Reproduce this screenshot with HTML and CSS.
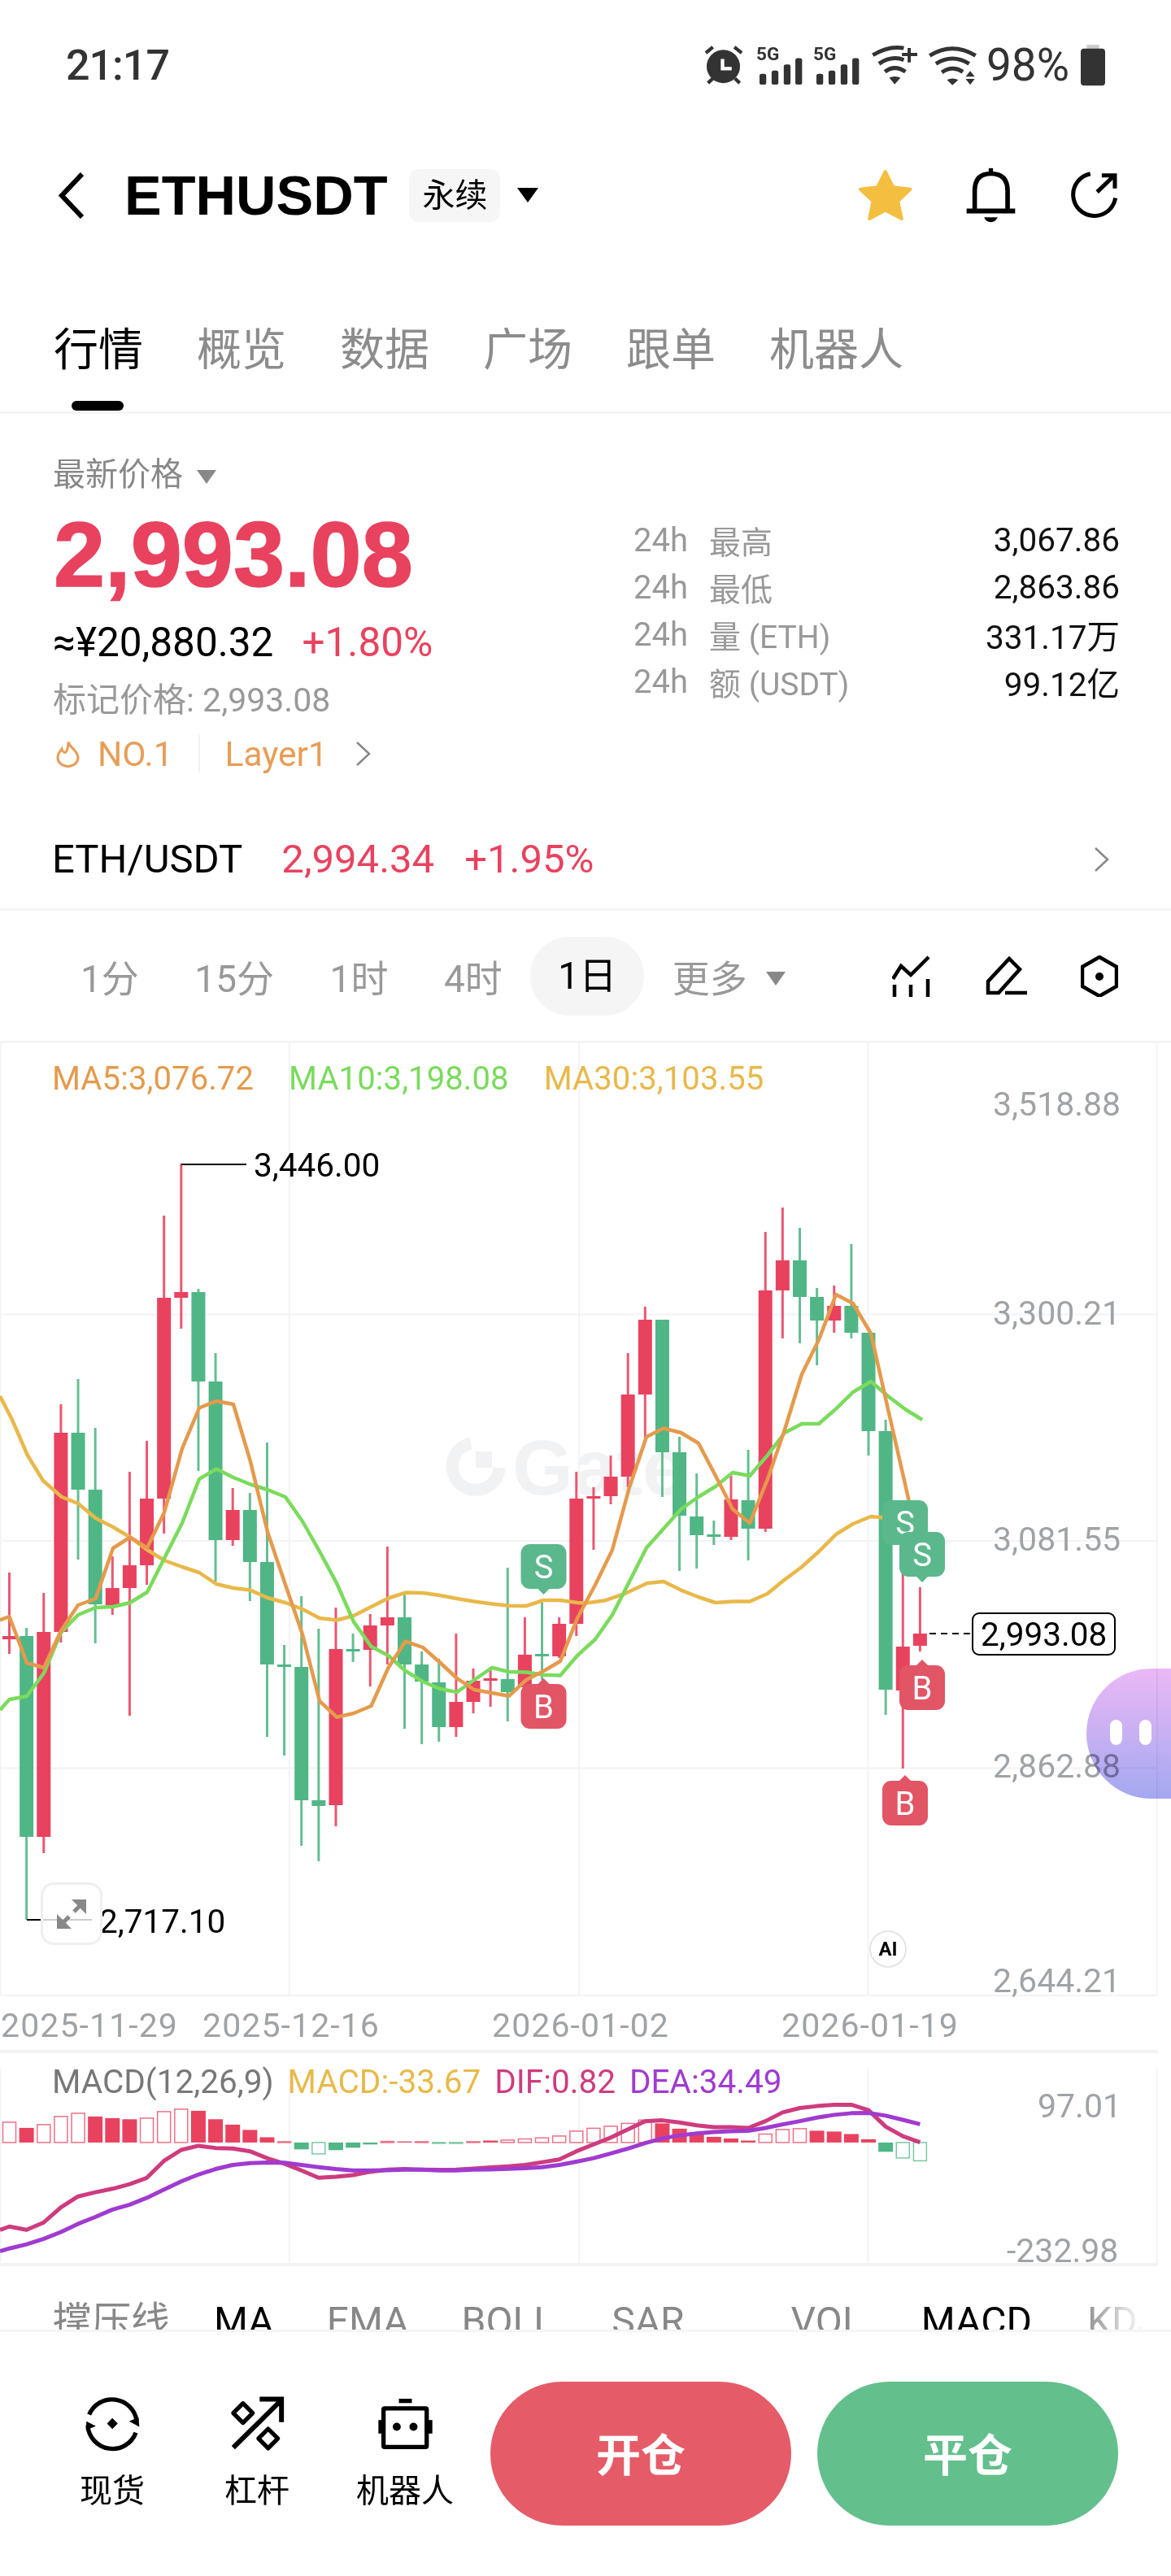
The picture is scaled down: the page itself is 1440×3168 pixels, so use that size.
FILE: index.html
```html
<!DOCTYPE html>
<html lang="zh-CN">
<head>
  <meta charset="UTF-8">
  <meta name="viewport" content="width=device-width, initial-scale=1.0">
  <title>ETHUSDT 永续</title>
  <link rel="stylesheet" href="styles.css">
</head>
<body>
  <div class="page">
    <div class="status">
      <span class="clock">21:17</span>
      <div class="status-icons">
        <svg class="ic-alarm" viewBox="18 30 145 150"><circle cx="89" cy="110" r="62" fill="#333"/><path d="M24 60 50 38M130 38 157 60M32 172 50 155M132 155 150 172" stroke="#333" stroke-width="13" fill="none"/><path d="M86 82V118H120" stroke="#fff" stroke-width="13" fill="none"/></svg>
        <svg class="ic-net" viewBox="205 30 175 155"><text x="205" y="88" class="net-text">5G</text><rect x="217" y="140" width="25" height="40" rx="8"/><rect x="262" y="128" width="25" height="52" rx="8"/><rect x="307" y="105" width="25" height="75" rx="8"/><rect x="350" y="82" width="25" height="98" rx="8"/></svg>
        <svg class="ic-net" viewBox="205 30 175 155"><text x="205" y="88" class="net-text">5G</text><rect x="217" y="140" width="25" height="40" rx="8"/><rect x="262" y="128" width="25" height="52" rx="8"/><rect x="307" y="105" width="25" height="75" rx="8"/><rect x="350" y="82" width="25" height="98" rx="8"/></svg>
        <svg class="ic-wifi" viewBox="630 30 175 150"><path d="M698 152Q718 142 740 152L718 177Z" fill="#333"/><path d="M682 130Q718 102 758 130M660 100Q708 68 752 86M637 68Q695 32 752 42" stroke="#333" stroke-width="15" fill="none"/><path d="M745 66H802M772 42V95" stroke="#333" stroke-width="12" fill="none"/></svg>
        <svg class="ic-wifi2" viewBox="848 30 178 150"><path d="M916 160Q936 150 958 160L936 180Z" fill="#333"/><path d="M897 132Q936 105 975 130M875 100Q936 62 998 100M852 70Q936 18 1022 70" stroke="#333" stroke-width="15" fill="none"/><path d="M985 148 1002 127 1019 148ZM985 156H1019L1002 178Z" fill="#333"/></svg>
        <span class="batt-text">98%</span>
        <svg class="ic-batt" viewBox="1410 28 90 152"><rect x="1432" y="28" width="46" height="16" fill="#ccc"/><rect x="1410" y="42" width="90" height="136" rx="12" fill="#333"/></svg>
      </div>
    </div>

    <div class="nav">
      <svg class="ic-back" viewBox="0 0 31 57"><path d="M29 2 4 28.5 29 55" fill="none" stroke="#000" stroke-width="6"/></svg>
      <span class="symbol">ETHUSDT</span>
      <span class="perp">永续</span>
      <span class="tri tri-black"></span>
      <div class="nav-right">
        <svg class="ic-star" viewBox="42 50 204 200"><path d="M143 62 172 120 236 128 190 172 204 238 143 206 84 238 97 172 50 128 114 120Z" fill="#F4BE41" stroke="#F4BE41" stroke-width="12" stroke-linejoin="round"/></svg>
        <svg class="ic-bell" viewBox="436 46 184 204"><path d="M468 205V132Q468 68 528 68 590 68 590 132V205" fill="none" stroke="#000" stroke-width="17"/><path d="M438 207H618" stroke="#000" stroke-width="18"/><rect x="520" y="48" width="16" height="18"/><path d="M503 230H553Q545 248 528 248 510 248 503 230Z"/></svg>
        <svg class="ic-share" viewBox="820 65 182 182"><path d="M900 76A78 78 0 1 0 992 165" fill="none" stroke="#000" stroke-width="15"/><path d="M925 143 985 85M942 82H990V130" fill="none" stroke="#000" stroke-width="15"/></svg>
      </div>
    </div>

    <div class="tabs">
      <span class="tab active">行情</span>
      <span class="tab">概览</span>
      <span class="tab">数据</span>
      <span class="tab">广场</span>
      <span class="tab">跟单</span>
      <span class="tab">机器人</span>
    </div>

    <div class="quote">
      <div class="quote-left">
        <div class="last-label">最新价格<span class="tri tri-gray"></span></div>
        <div class="last-price">2,993.08</div>
        <div class="cny">≈¥20,880.32<span class="up">+1.80%</span></div>
        <div class="mark">标记价格: 2,993.08</div>
        <div class="tags">
          <svg class="ic-flame" viewBox="0 0 29 33"><path d="M15 1.5C17 9 27 12 27 21A12.500 10.500 0 0 1 2 21C2 15 5 13 7 10 8 14 10 15 12 14 14 11 15 7 15 1.500Z" fill="none" stroke="#E89D57" stroke-width="3"/></svg>
          <span>NO.1</span>
          <i class="tag-sep"></i>
          <span>Layer1</span>
          <svg class="ic-more" viewBox="0 0 19 30"><path d="M2 1 17 15 2 29" fill="none" stroke="#888" stroke-width="2.500"/></svg>
        </div>
      </div>
      <div class="stats">
        <div class="stat"><span class="h">24h</span><span class="k">最高</span><span class="v">3,067.86</span></div>
        <div class="stat"><span class="h">24h</span><span class="k">最低</span><span class="v">2,863.86</span></div>
        <div class="stat"><span class="h">24h</span><span class="k">量 (ETH)</span><span class="v">331.17万</span></div>
        <div class="stat"><span class="h">24h</span><span class="k">额 (USDT)</span><span class="v">99.12亿</span></div>
      </div>
    </div>

    <div class="spot">
      <span class="spot-name">ETH/USDT</span>
      <span class="up spot-price">2,994.34</span>
      <span class="up">+1.95%</span>
      <svg class="ic-more spot-more" viewBox="0 0 19 30"><path d="M2 1 17 15 2 29" fill="none" stroke="#888" stroke-width="2.500"/></svg>
    </div>

    <div class="toolbar">
      <span class="tf">1分</span>
      <span class="tf">15分</span>
      <span class="tf">1时</span>
      <span class="tf">4时</span>
      <span class="tf active">1日</span>
      <span class="tf">更多<span class="tri tri-gray tri-more"></span></span>
      <div class="tools">
        <svg class="ic-kind" viewBox="1097 1177 47 51"><path d="M1098 1206 1108 1190 1120 1201 1142 1179" fill="none" stroke="#000" stroke-width="4.500"/><path d="M1100 1213V1228M1120 1213V1228M1141 1206V1228" stroke="#000" stroke-width="4.500"/></svg>
        <svg class="ic-pen" viewBox="1212 1175 52 50"><path d="M1215 1221V1207L1241 1179 1254 1192 1228 1221Z" fill="none" stroke="#000" stroke-width="4.500"/><path d="M1236 1221H1263" stroke="#000" stroke-width="4.500"/></svg>
        <svg class="ic-hex" viewBox="1329 1177 46 51"><path d="M1352 1179 1373 1191V1215L1352 1227 1331 1215V1191Z" fill="none" stroke="#000" stroke-width="4.500"/><circle cx="1352" cy="1203" r="5"/></svg>
      </div>
    </div>

    <div class="chart">
      <svg class="watermark" viewBox="0 0 76 74"><path d="M32 8A29 29 0 1 0 67 38" fill="none" stroke="#F1F2F4" stroke-width="15"/><rect x="38" y="18" width="20" height="20" fill="#F1F2F4"/></svg>
      <span class="wm-text">Gate</span>
      <svg id="kline" class="plot" viewBox="0 1281 1440 1241"></svg>
      <div class="legend">
        <span class="ma5">MA5:3,076.72</span>
        <span class="ma10">MA10:3,198.08</span>
        <span class="ma30">MA30:3,103.55</span>
      </div>
      <div class="expand">
        <svg viewBox="0 0 36 36"><path d="M4 32 15 21M21 15 32 4" stroke="#888" stroke-width="5"/><path d="M0 18V36H18ZM18 0H36V18Z" fill="#888"/></svg>
      </div>
      <div class="ai">AI</div>
      <div class="bubble"><i></i><i></i></div>
    </div>

    <div class="macd">
      <svg id="macd" class="plot" viewBox="0 2522 1440 266"></svg>
      <div class="legend macd-legend">
        <span class="m-name">MACD(12,26,9)</span>
        <span class="m-macd">MACD:-33.67</span>
        <span class="m-dif">DIF:0.82</span>
        <span class="m-dea">DEA:34.49</span>
      </div>
    </div>

    <div class="inds">
      <span class="ind ind-first">撑压线</span>
      <span class="ind on">MA</span>
      <span class="ind">EMA</span>
      <span class="ind">BOLL</span>
      <span class="ind ind-sar">SAR</span>
      <i class="ind-sep"></i>
      <span class="ind">VOL</span>
      <span class="ind on ind-macd">MACD</span>
      <span class="ind">KDJ</span>
    </div>

    <div class="bottom">
      <div class="tool">
        <svg viewBox="40 24 208 208"><path d="M57 95A92 92 0 0 1 233 118M230 162A92 92 0 0 1 52 135" fill="none" stroke="#000" stroke-width="16"/><path d="M205 120 240 105 243 140ZM82 138 47 120 45 152ZM143 108 163 128 143 148 123 128Z"/></svg>
        <span>现货</span>
      </div>
      <div class="tool">
        <svg viewBox="585 40 185 185"><path d="M598 212 760 52M685 52H757V128" fill="none" stroke="#000" stroke-width="16"/><path d="M630 66 662 98 630 130 598 98ZM713 150 745 182 713 214 681 182Z" fill="none" stroke="#000" stroke-width="14" stroke-linejoin="round"/></svg>
        <span>杠杆</span>
      </div>
      <div class="tool tool-bot">
        <svg viewBox="1120 30 208 196"><rect x="1143" y="72" width="160" height="143" rx="4" fill="none" stroke="#000" stroke-width="16"/><rect x="1200" y="36" width="48" height="16"/><rect x="1124" y="115" width="14" height="50"/><rect x="1310" y="115" width="14" height="50"/><circle cx="1192" cy="140" r="15"/><circle cx="1254" cy="140" r="15"/></svg>
        <span>机器人</span>
      </div>
      <div class="actions">
        <button class="btn btn-open">开仓</button>
        <button class="btn btn-close">平仓</button>
      </div>
    </div>
  </div>
  <script src="chart.js"></script>
</body>
</html>
```

FILE: styles.css
```css
* {
  box-sizing: border-box;
}
body {
  margin: 0;
  background: #fff;
  font-family: Roboto, "Noto Sans CJK SC", sans-serif;
  color: #000;
}
.page {
  width: 1440px;
  height: 3168px;
  overflow: hidden;
}
svg {
  display: block;
  flex: none;
}
.up {
  color: #E8425F;
}

/* triangles */
.tri {
  display: inline-block;
  width: 0;
  height: 0;
  border-style: solid;
  border-color: transparent;
  border-bottom: 0;
}
.tri-black {
  border-width: 18px 13px 0;
  border-top-color: #000;
  margin-left: 21px;
}
.tri-gray {
  border-width: 17px 12px 0;
  border-top-color: #888;
  margin-left: 17px;
}

/* status bar */
.status {
  height: 160px;
  display: flex;
  align-items: center;
  justify-content: space-between;
  padding: 0 81px;
  color: #333;
}
.clock {
  font-size: 52px;
  font-weight: 500;
  letter-spacing: -1px;
}
.status-icons {
  display: flex;
  align-items: center;
}
.ic-alarm { width: 48px; height: 50px; margin-right: 16px; }
.ic-net { width: 58px; height: 52px; margin-right: 12px; fill: #333; }
.net-text { font-size: 68px; font-weight: 700; font-family: Roboto, sans-serif; }
.ic-wifi { width: 58px; height: 50px; margin-left: 1px; margin-right: 13px; }
.ic-wifi2 { width: 59px; height: 50px; margin-right: 12px; }
.batt-text { font-size: 55px; margin-right: 14px; }
.ic-batt { width: 30px; height: 51px; }

/* nav */
.nav {
  height: 160px;
  display: flex;
  align-items: center;
  padding-left: 72px;
  padding-right: 65px;
}
.ic-back { width: 31px; height: 57px; margin-right: 50px; }
.symbol {
  font-family: "Liberation Sans", sans-serif;
  font-weight: 700;
  font-size: 68.5px;
  margin-right: 27px;
}
.perp {
  width: 112px;
  height: 65px;
  background: #F6F6F6;
  border-radius: 12px;
  font-size: 40px;
  line-height: 65px;
  text-align: center;
}
.nav-right {
  margin-left: auto;
  display: flex;
  align-items: center;
}
.ic-star { width: 68px; height: 66px; margin-right: 65px; }
.ic-bell { width: 61px; height: 68px; margin-right: 65px; }
.ic-share { width: 61px; height: 61px; }

/* tabs */
.tabs {
  height: 189px;
  display: flex;
  gap: 66px;
  padding: 78px 0 0 66px;
  border-bottom: 3px solid #F5F5F5;
}
.tab {
  position: relative;
  font-size: 55px;
  line-height: 64px;
  height: 64px;
  color: #8c8c8c;
}
.tab.active {
  color: #000;
}
.tab.active::after {
  content: "";
  position: absolute;
  left: 22px;
  top: 95px;
  width: 64px;
  height: 12px;
  border-radius: 6px;
  background: #000;
}

/* quote */
.quote {
  height: 491px;
  display: flex;
  padding-left: 65px;
}
.quote-left {
  width: 714px;
}
.last-label {
  margin-top: 50px;
  font-size: 40px;
  line-height: 50px;
  color: #888;
}
.last-label .tri {
  vertical-align: 2px;
}
.last-price {
  font-family: "Liberation Sans", sans-serif;
  font-weight: 700;
  font-size: 113.5px;
  line-height: 120px;
  margin: 13px 0 0 1px;
  color: #E8425F;
  -webkit-text-stroke: 1.5px #E8425F;
}
.cny {
  font-size: 49.5px;
  line-height: 56px;
  margin-top: 20px;
}
.cny .up {
  margin-left: 35px;
}
.mark {
  font-size: 41px;
  line-height: 50px;
  margin-top: 18px;
  color: #999;
}
.tags {
  display: flex;
  align-items: center;
  height: 50px;
  margin-top: 16px;
  font-size: 42.5px;
  color: #E89D57;
}
.ic-flame { width: 29px; height: 33px; margin-left: 4px; margin-right: 22px; }
.tag-sep {
  width: 2px;
  height: 46px;
  background: #F2F2F2;
  margin: 0 31px;
}
.ic-more { width: 19px; height: 30px; margin-left: 34px; }
.stats {
  width: 598px;
  padding-top: 126px;
}
.stat {
  display: flex;
  height: 58px;
  align-items: center;
  font-size: 39px;
  color: #999;
}
.stat .h {
  width: 93px;
  font-size: 40px;
}
.stat .v {
  margin-left: auto;
  font-size: 40.5px;
  color: #111;
}

/* spot row */
.spot {
  height: 120px;
  display: flex;
  align-items: center;
  padding: 0 76px 4px 64px;
  font-size: 49px;
  border-bottom: 3px solid #F5F5F5;
}
.spot-name {
  margin-right: 48px;
}
.spot-price {
  margin-right: 37px;
}
.spot-more {
  margin-left: auto;
}

/* timeframe toolbar */
.toolbar {
  height: 160px;
  display: flex;
  align-items: center;
  gap: 68.5px;
  padding: 0 65px 0 99px;
  font-size: 46px;
  color: #999;
}
.tf {
  white-space: nowrap;
}
.tf.active {
  height: 97px;
  line-height: 97px;
  padding: 0 34px;
  margin: 0 -34px;
  border-radius: 48px;
  background: #F5F5F5;
  color: #000;
}
.tri-more {
  vertical-align: 8px;
  margin-left: 23px;
}
.tools {
  margin-left: auto;
  display: flex;
  align-items: center;
}
.ic-kind { width: 47px; height: 51px; margin-right: 68px; }
.ic-pen { width: 52px; height: 50px; margin-right: 65px; }
.ic-hex { width: 46px; height: 51px; }

/* kline */
.chart {
  position: relative;
  height: 1241px;
}
.plot {
  width: 1440px;
  height: 100%;
  position: relative;
}
.legend {
  position: absolute;
  left: 64px;
  top: 22px;
  display: flex;
  gap: 43px;
  font-size: 40px;
  line-height: 50px;
  letter-spacing: .1px;
  white-space: nowrap;
}
.ma5 { color: #E59A4C; }
.ma10 { color: #7ADB5C; }
.ma30 { color: #E9B84A; }
.watermark {
  position: absolute;
  left: 547px;
  top: 487px;
  width: 76px;
  height: 74px;
}
.wm-text {
  position: absolute;
  left: 630px;
  top: 465px;
  font-family: "Liberation Sans", sans-serif;
  font-weight: 700;
  font-size: 96px;
  line-height: 120px;
  color: #F1F2F4;
}
.expand {
  position: absolute;
  left: 50px;
  top: 1035px;
  width: 76px;
  height: 77px;
  display: flex;
  align-items: center;
  justify-content: center;
  border: 3px solid #EFEFEF;
  border-radius: 16px;
  background: rgba(255, 255, 255, .8);
}
.expand svg {
  width: 36px;
  height: 36px;
}
.ai {
  position: absolute;
  left: 1069px;
  top: 1094px;
  width: 46px;
  height: 46px;
  border: 2px solid #E4E4E4;
  border-radius: 50%;
  background: #fff;
  font-size: 24px;
  font-weight: 700;
  line-height: 42px;
  text-align: center;
}
.bubble {
  position: absolute;
  right: 0;
  top: 772px;
  width: 104px;
  height: 160px;
  display: flex;
  align-items: center;
  gap: 21px;
  padding-left: 29px;
}
/* multiply so the axis label shows through, as in the app */
.bubble::before {
  content: "";
  position: absolute;
  inset: 0;
  border-radius: 80px 0 0 80px;
  background: linear-gradient(180deg, #EBB8F6 0%, #A4A8F0 100%);
  mix-blend-mode: multiply;
}
.bubble i {
  position: relative;
  width: 15px;
  height: 31px;
  margin-top: -4px;
  border-radius: 8px;
  background: #fff;
}
.tick { font-size: 41px; fill: #9FA3A6; }
.tick-date { letter-spacing: 1.1px; }
.tick-dark { font-size: 40.5px; fill: #000; }
.sig { font-size: 40px; fill: #fff; text-anchor: middle; }

/* macd */
.macd {
  position: relative;
  height: 266px;
  border-top: 4px solid #F3F3F3;
  border-bottom: 4px solid #F3F3F3;
  margin-right: 16px;
}
.macd .plot {
  position: absolute;
  left: 0;
  top: -4px;
  height: 266px;
}
.macd-legend {
  top: 10px;
  gap: 17px;
  font-size: 40.5px;
  letter-spacing: 0;
}
.m-name { color: #777; }
.m-macd { color: #E8B94A; }
.m-dif { color: #CE3C7E; }
.m-dea { color: #A03BD0; }

/* indicators, cut by the bottom bar */
.inds {
  position: relative;
  height: 78px;
  display: flex;
  overflow: hidden;
  padding: 41px 0 0 65px;
  font-size: 48px;
  line-height: 54px;
  color: #888;
  white-space: nowrap;
}
.inds::after {
  content: "";
  position: absolute;
  right: 0;
  top: 0;
  width: 110px;
  height: 100%;
  background: linear-gradient(90deg, rgba(255, 255, 255, 0), #fff 70%);
}
.ind {
  margin-right: 65px;
}
.ind-first {
  margin-right: 54px;
}
.ind-sar {
  margin-left: 5px;
}
.ind-macd {
  margin-left: 6px;
  margin-right: 68px;
}
.ind.on {
  color: #000;
}
.ind-sep {
  width: 2px;
  height: 40px;
  background: #E8E8E8;
  margin: -8px 66px 0 0;
}

/* bottom bar */
.bottom {
  height: 302px;
  display: flex;
  align-items: center;
  border-top: 3px solid #F5F5F5;
  padding: 0 65px 0 49px;
}
.tool {
  width: 178px;
  display: flex;
  flex-direction: column;
  align-items: center;
  gap: 24px;
  font-size: 40px;
  line-height: 50px;
}
.tool svg {
  width: 69px;
  height: 69px;
}
.tool-bot {
  margin-left: 4px;
}
.actions {
  margin-left: auto;
  display: flex;
  gap: 32px;
  margin-top: -1px;
}
.btn {
  width: 370px;
  height: 177px;
  padding: 0 0 4px;
  border: none;
  border-radius: 89px;
  color: #fff;
  font-family: inherit;
  font-size: 55px;
  font-weight: 700;
}
.btn-open { background: #E55B68; }
.btn-close { background: #63BF8C; }
```

FILE: chart.js
```js
const NS = 'http://www.w3.org/2000/svg';
const RED = '#E8425F';
const GREEN = '#50B685';

function add(svg, tag, attrs, text) {
  const el = document.createElementNS(NS, tag);
  for (const k in attrs) el.setAttribute(k, attrs[k]);
  if (text) el.textContent = text;
  svg.appendChild(el);
  return el;
}

const xAt = i => 11.5 + 21.13 * i;

// [color, high, top, bottom, low], page pixels
const candles = [
  ['r',1935,2013,2017,2035],['g',2003,2013,2260,2362],['r',1960,2008,2260,2280],['r',1728,1763,2008,2021],
  ['g',1697,1763,1833,1919],['g',1757,1833,1974,2022],['r',1915,1954,1975,1987],['r',1811,1926,1954,2111],
  ['r',1773,1844,1926,1950],['r',1496,1597,1844,1887],['r',1432,1590,1597,1635],['g',1586,1590,1700,1810],
  ['g',1665,1700,1895,1946],['r',1831,1858,1895,1902],['g',1837,1858,1922,1970],['g',1775,1922,2048,2137],
  ['g',2024,2048,2051,2160],['g',1964,2051,2215,2271],['g',2004,2215,2222,2290],['r',1978,2029,2221,2247],
  ['g',2010,2029,2032,2045],['r',1986,2000,2030,2075],['r',1903,1990,2000,2048],['g',1958,1990,2048,2127],
  ['g',2032,2048,2069,2146],['g',2041,2070,2125,2143],['r',2010,2094,2125,2137],['r',2053,2068,2094,2108],
  ['r',2051,2065,2068,2100],['g',1929,2066,2082,2118],['r',1990,2036,2076,2082],['g',1972,2035,2038,2067],
  ['r',1990,1998,2038,2040],['r',1811,1844,1998,2013],['r',1830,1841,1844,1907],['r',1791,1817,1841,1851],
  ['r',1665,1716,1817,1830],['r',1608,1624,1716,1770],['g',1624,1624,1787,1842],['g',1768,1787,1865,1933],
  ['g',1813,1866,1889,1930],['g',1871,1888,1891,1901],['r',1816,1845,1891,1895],['g',1784,1846,1881,1920],
  ['r',1516,1588,1881,1885],['r',1486,1551,1588,1647],['g',1511,1551,1596,1653],['g',1585,1596,1625,1680],
  ['r',1582,1607,1625,1640],['g',1531,1607,1640,1647],['g',1640,1640,1761,1791],['g',1747,1761,2079,2110],
  ['r',1902,2026,2080,2176],['r',1953,2010,2025,2032]
];

const ma30 = [[0,1718],[14,1745],[34,1791],[53,1822],[76,1842],[96,1850],[117.5,1868],[139,1879],[160,1891.5],[181,1907],[202,1920],[224,1928],[245,1935],[266,1949],[287,1954],[308,1956.6],[329,1966],[351,1972],[372,1980],[393,1991],[414,1993.5],[435,1988],[456.5,1977],[477.5,1966.5],[498.6,1959.6],[520,1960],[541,1963],[562,1967],[583,1970.5],[605,1973.5],[626,1975.7],[647,1976],[668.5,1969],[689,1969],[710,1972],[720,1972.6],[743,1969.6],[768,1961],[796,1948],[816,1946],[837.5,1956.6],[858.7,1965],[880,1972],[901,1970.5],[922,1970.5],[943.6,1961],[965,1943.6],[986,1928],[1007,1909],[1028,1888],[1049,1875],[1071,1866],[1092,1868]];
const ma10 = [[0,2104],[11.5,2091],[33,2087],[54,2058.5],[75,2008.6],[96,1987],[117.5,1978],[139,1977],[160,1972],[181,1959],[202,1917.6],[224,1874],[245,1820],[266,1807.5],[287,1818],[308,1826.5],[329,1833],[351,1842],[372,1872],[393,1909],[414,1948],[435,1995.6],[456.5,2026],[477.5,2037],[498.6,2056],[520,2069],[541,2078],[562,2082],[583,2067],[605,2052],[626,2057],[647,2057.6],[668.5,2060.7],[689,2061.5],[710,2037],[732,2017],[753,1987],[774,1946],[795,1904.6],[816,1881],[837.5,1857],[858.7,1842],[880,1829],[901,1812],[922,1816],[943.6,1791],[965,1763],[986,1752],[1007,1752],[1028,1733.6],[1049,1713],[1071,1700],[1092,1718],[1113,1734],[1134,1747]];
const ma5 = [[0,1993.5],[11.5,1989],[33,2046],[54,2052],[75,2006.5],[96,1975],[117.5,1967],[139,1905],[160,1891.5],[181,1904.6],[202,1861],[224,1782.5],[245,1732.5],[266,1724],[287,1728],[308,1798.6],[329,1885],[351,1950],[372,2011],[393,2093],[414,2112.7],[435,2108],[456.5,2099],[477.5,2052],[498.6,2019.5],[520,2027],[541,2045.5],[562,2065],[583,2079],[605,2083],[626,2086.7],[647,2067],[668.5,2056],[689,2044],[710,1991],[732,1950],[753,1907],[774,1830],[795,1768],[816,1757.5],[837.5,1763],[859,1776],[880,1816],[901,1857],[922,1874],[944,1820],[965,1759],[986,1691],[1007,1648.6],[1028,1593],[1049,1604],[1071,1641],[1092,1734],[1113,1826],[1134,1920]];

function polyline(svg, pts, color, w) {
  add(svg, 'polyline', { points: pts.join(' '), fill: 'none', stroke: color, 'stroke-width': w, 'stroke-linejoin': 'round' });
}

function grid(svg, hs, top, bottom) {
  [0.5, 356, 712, 1067.5, 1423].forEach(x => {
    add(svg, 'line', { x1: x, x2: x, y1: top, y2: bottom, stroke: '#F2F3F5', 'stroke-width': 2 });
  });
  hs.forEach(y => {
    add(svg, 'line', { x1: 0, x2: 1423, y1: y, y2: y, stroke: '#F2F3F5', 'stroke-width': 2 });
  });
}

function signal(svg, x, top, type) {
  // 56 x 55 badge; S points down, B points up
  const color = type === 'S' ? '#5AB88C' : '#E15565';
  add(svg, 'rect', { x: x - 28, y: top, width: 56, height: 55, rx: 11, fill: color });
  const tip = type === 'S' ? `${x - 8},${top + 54} ${x + 8},${top + 54} ${x},${top + 62}`
                           : `${x - 8},${top + 1} ${x + 8},${top + 1} ${x},${top - 7}`;
  add(svg, 'polygon', { points: tip, fill: color });
  add(svg, 'text', { x: x, y: top + 42, class: 'sig' }, type);
}

function drawKline() {
  const svg = document.getElementById('kline');
  add(svg, 'line', { x1: 0, x2: 1440, y1: 1282, y2: 1282, stroke: '#F3F3F3', 'stroke-width': 3 });
  grid(svg, [1617.5, 1896, 2175.6, 2455], 1281, 2455);

  candles.forEach((c, i) => {
    const x = xAt(i);
    const color = c[0] === 'r' ? RED : GREEN;
    add(svg, 'line', { x1: x, x2: x, y1: c[1], y2: c[4], stroke: color, 'stroke-width': 3, opacity: .88 });
    add(svg, 'rect', { x: x - 8.5, y: c[2], width: 17, height: c[3] - c[2], fill: color });
  });

  polyline(svg, ma30, '#E9B84A', 4.5);
  polyline(svg, ma10, '#7ADB5C', 4.5);
  polyline(svg, ma5, '#E59A4C', 4.5);

  // high, low and last price markers
  add(svg, 'path', { d: 'M223 1433H303M33 2362H113', stroke: '#000', 'stroke-width': 2, fill: 'none' });
  add(svg, 'text', { x: 312, y: 1448, class: 'tick-dark' }, '3,446.00');
  add(svg, 'text', { x: 122, y: 2378, class: 'tick-dark' }, '2,717.10');
  add(svg, 'path', { d: 'M1143 2010H1195', stroke: '#000', 'stroke-width': 2, 'stroke-dasharray': '8 6', fill: 'none' });
  add(svg, 'rect', { x: 1196, y: 1985, width: 175, height: 51, rx: 8, fill: '#fff', stroke: '#000', 'stroke-width': 2 });
  add(svg, 'text', { x: 1206, y: 2025, class: 'tick-dark' }, '2,993.08');

  signal(svg, 668.5, 1900, 'S');
  signal(svg, 668.5, 2072, 'B');
  signal(svg, 1113, 1846, 'S');
  signal(svg, 1134, 1885, 'S');
  signal(svg, 1134, 2049, 'B');
  signal(svg, 1113, 2191, 'B');

  [['3,518.88', 1373], ['3,300.21', 1630], ['3,081.55', 1908], ['2,862.88', 2187], ['2,644.21', 2451]].forEach(t => {
    add(svg, 'text', { x: 1221, y: t[1], class: 'tick' }, t[0]);
  });
  [['2025-11-29', 1], ['2025-12-16', 249], ['2026-01-02', 605], ['2026-01-19', 961]].forEach(t => {
    add(svg, 'text', { x: t[1], y: 2506, class: 'tick tick-date' }, t[0]);
  });
}

// macd points were read off a 1.089 x 2.97 crop that starts at y=2480
const my = v => 2480 + v / 2.97;
const base = my(463);
const bars = [
  [25,0],[18,1],[22,0],[32,0],[36,0],[32,1],[30,1],[28.6,1],[30,0],[38,0],[41,0],[39,1],[28.6,1],[22,1],[15.5,1],[6.4,1],
  [1,0],[-8.4,1],[-14,0],[-9.4,1],[-6.4,1],[-2.4,1],[1.3,0],[1.3,1],[1,0],[-1,0],[-1,0],[1,0],[2.4,1],[3,0],[4.4,0],[5.7,0],
  [8,0],[14,0],[17.5,0],[20,0],[23.5,0],[27.6,0],[23.5,1],[17,1],[12,1],[7,1],[5,1],[2.4,1],[10.4,0],[16,0],[17,0],[14.5,1],
  [13.5,1],[10.4,1],[4,1],[-11.4,1],[-19,0],[-22.5,0]
];
const dif = [782,770,782,755,700,660,645,632,615,592,530,490,475,483,485,495,520,540,565,592,588,582,570,562,560,562,563,562,558,554,550,545,535,525,495,470,445,415,385,382,390,400,407,407,410,385,353,337,330,325,325,345,405,440,462];
const dea = [860,850,835,815,790,760,735,708,690,665,635,605,580,560,545,538,536,537,545,553,560,565,565,564,562,562,565,565,562,561,559,557,553,545,533,520,503,485,465,448,437,430,425,422,420,410,397,385,372,362,356,355,365,380,396];

function drawMacd() {
  const svg = document.getElementById('macd');
  grid(svg, [], 2545, 2786);
  bars.forEach((b, i) => {
    const x = xAt(i) - 9;
    const color = b[0] > 0 ? RED : GREEN;
    const h = Math.abs(b[0]);
    const y = b[0] > 0 ? base - h : base;
    if (b[1]) {
      add(svg, 'rect', { x: x, y: y, width: 18, height: h, fill: color });
    } else {
      add(svg, 'rect', { x: x + 1, y: y, width: 16, height: h, fill: '#fff', stroke: color, 'stroke-width': 1.5, opacity: .75 });
    }
  });
  const toPts = arr => arr.map((v, i) => [i === 0 ? 0 : xAt(i - 1), my(v)]);
  polyline(svg, toPts(dif), '#CE3C7E', 5);
  polyline(svg, toPts(dea), '#A03BD0', 5);
  add(svg, 'text', { x: 1276, y: 2605, class: 'tick' }, '97.01');
  add(svg, 'text', { x: 1238, y: 2783, class: 'tick' }, '-232.98');
}

drawKline();
drawMacd();
```
